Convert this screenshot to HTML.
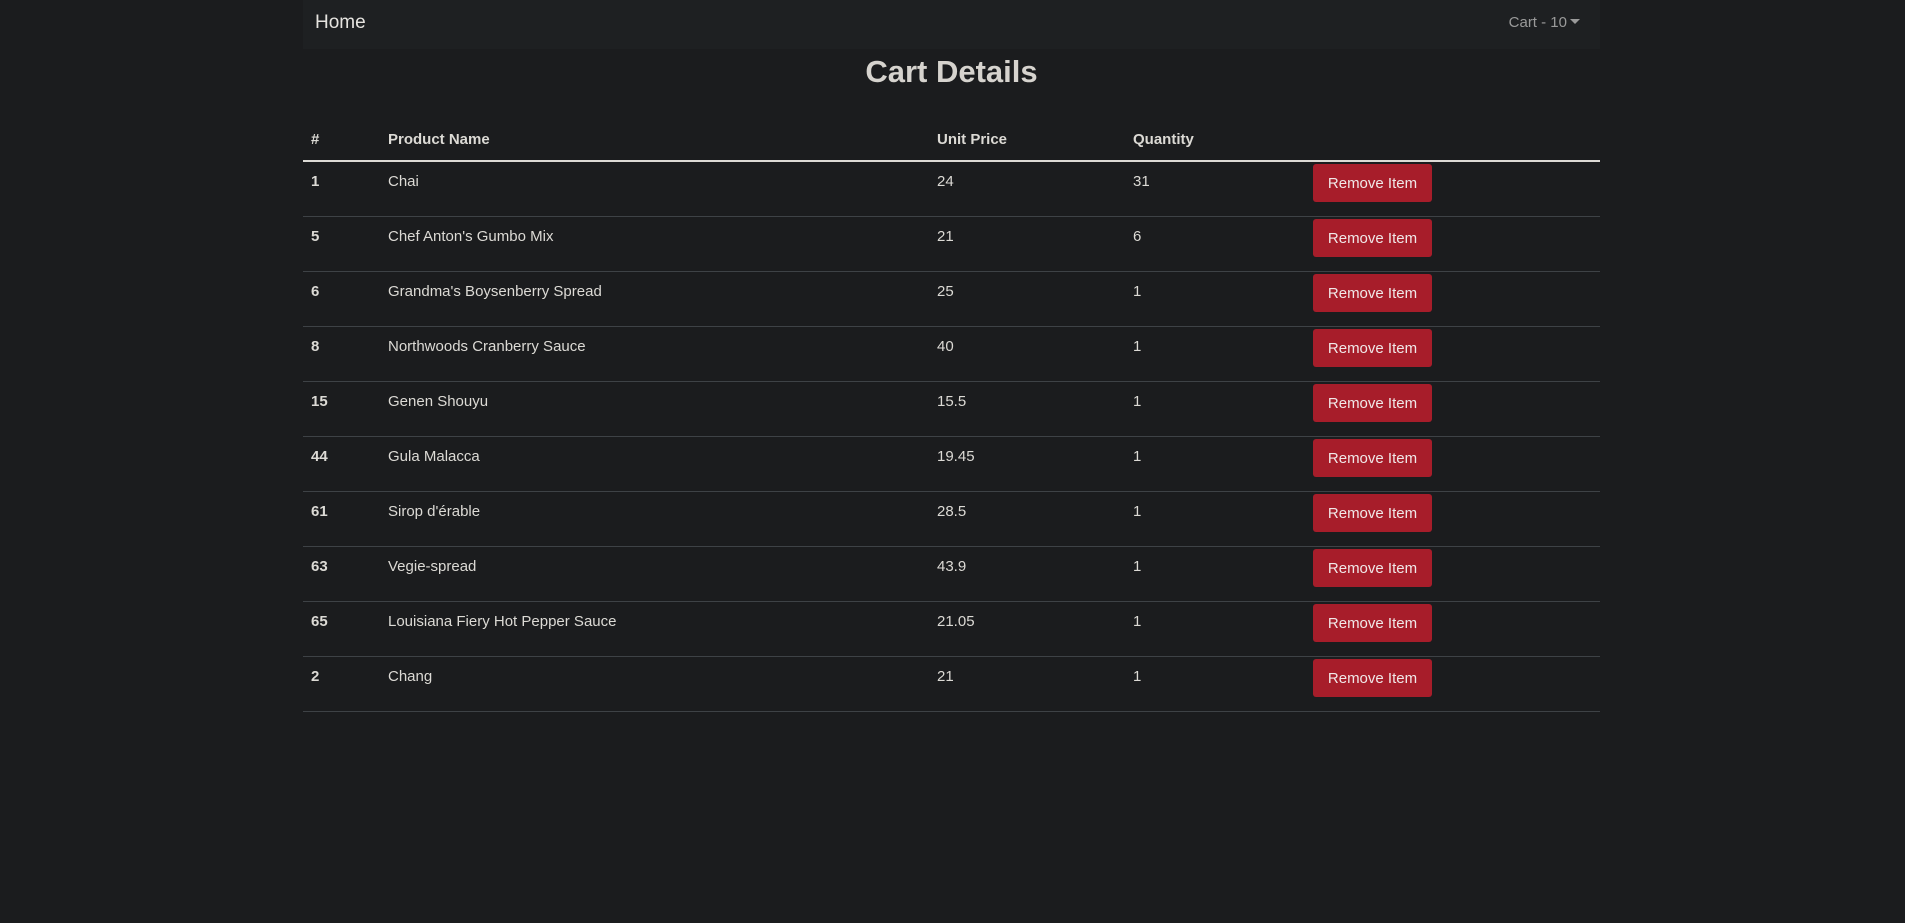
<!DOCTYPE html>
<html><head><meta charset="utf-8"><style>
html,body{margin:0;padding:0;background:#1b1c1e;color:#dcdad5;font-family:"Liberation Sans",sans-serif;font-size:15px;}
.wrap{width:1297px;margin-left:303px;}
.nav{height:49px;background:#1e2022;position:relative;}
.nav .home{position:absolute;left:12px;top:12px;font-size:19px;color:#e6e4e0;}
.nav .cart{position:absolute;right:20px;top:14px;font-size:15px;color:#9a9a9a;}
.nav .cart:after{content:"";display:inline-block;margin-left:3px;vertical-align:3px;border-top:5px solid #9a9a9a;border-left:5px solid transparent;border-right:5px solid transparent;}
h1{margin:0;height:71px;line-height:46px;text-align:center;font-size:31px;font-weight:bold;color:#d6d3ce;}
table{width:100%;border-collapse:collapse;}
th,td{text-align:left;padding:8px;line-height:24px;vertical-align:top;}
th{font-weight:bold;font-size:15px;border-bottom:2px solid #dcdad5;height:23px;}
td{border-bottom:1px solid #3e4246;height:38px;}
td:first-child{font-weight:bold;}
.c1{width:61px}.c2{width:533px}.c3{width:180px}.c4{width:164px}
button{background:#a71d2a;color:#f0e8e8;border:0;border-radius:3px;font-family:inherit;font-size:15px;height:38px;width:119px;margin-top:-6px;padding:0;}
</style></head><body><div class="wrap">
<div class="nav"><span class="home">Home</span><span class="cart">Cart - 10</span></div>
<h1>Cart Details</h1>
<table>
<tr><th class="c1">#</th><th class="c2">Product Name</th><th class="c3">Unit Price</th><th class="c4">Quantity</th><th></th></tr>
<tr><td>1</td><td>Chai</td><td>24</td><td>31</td><td><button>Remove Item</button></td></tr>
<tr><td>5</td><td>Chef Anton's Gumbo Mix</td><td>21</td><td>6</td><td><button>Remove Item</button></td></tr>
<tr><td>6</td><td>Grandma's Boysenberry Spread</td><td>25</td><td>1</td><td><button>Remove Item</button></td></tr>
<tr><td>8</td><td>Northwoods Cranberry Sauce</td><td>40</td><td>1</td><td><button>Remove Item</button></td></tr>
<tr><td>15</td><td>Genen Shouyu</td><td>15.5</td><td>1</td><td><button>Remove Item</button></td></tr>
<tr><td>44</td><td>Gula Malacca</td><td>19.45</td><td>1</td><td><button>Remove Item</button></td></tr>
<tr><td>61</td><td>Sirop d'érable</td><td>28.5</td><td>1</td><td><button>Remove Item</button></td></tr>
<tr><td>63</td><td>Vegie-spread</td><td>43.9</td><td>1</td><td><button>Remove Item</button></td></tr>
<tr><td>65</td><td>Louisiana Fiery Hot Pepper Sauce</td><td>21.05</td><td>1</td><td><button>Remove Item</button></td></tr>
<tr><td>2</td><td>Chang</td><td>21</td><td>1</td><td><button>Remove Item</button></td></tr>
</table>
</div></body></html>
